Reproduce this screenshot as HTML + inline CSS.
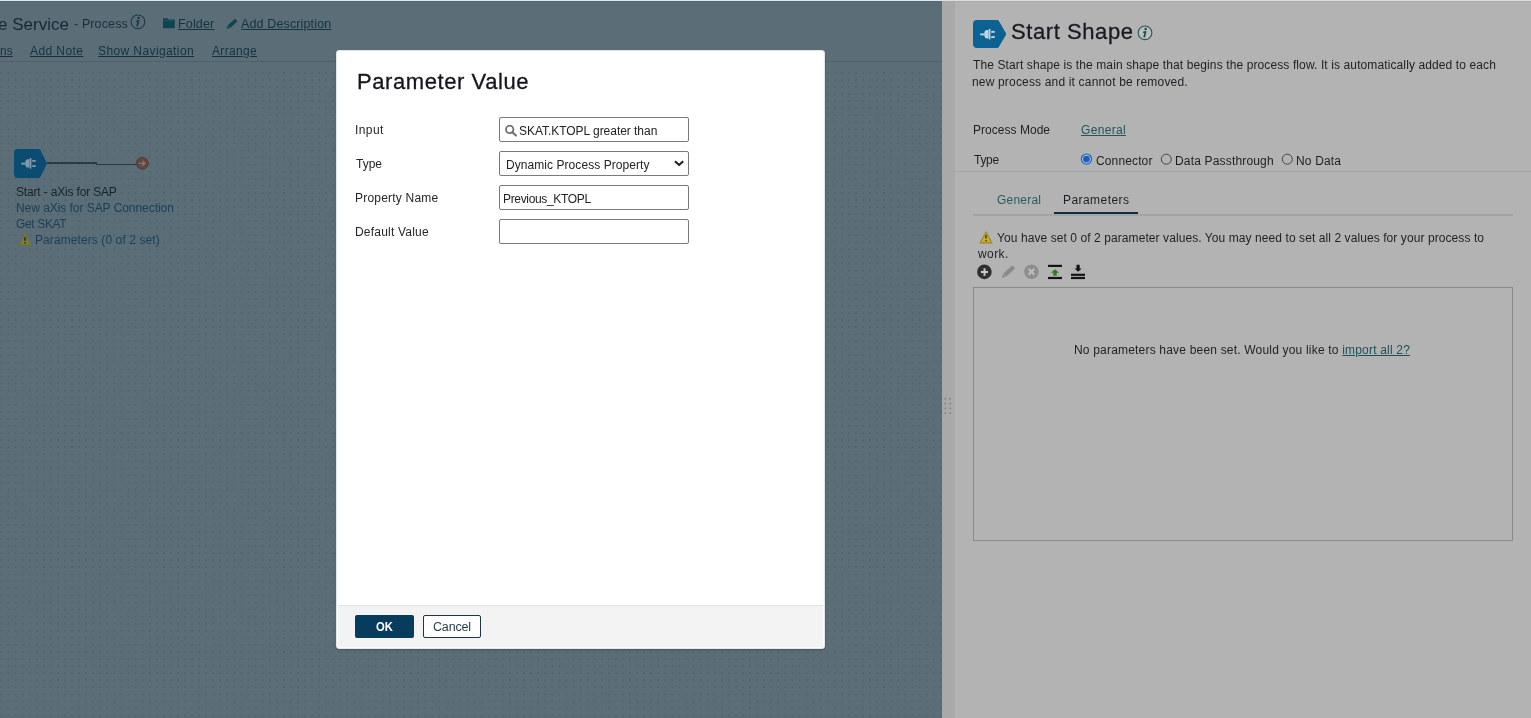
<!DOCTYPE html>
<html><head><meta charset="utf-8">
<style>
*{margin:0;padding:0;box-sizing:border-box}
html,body{width:1531px;height:718px;overflow:hidden;font-family:"Liberation Sans",sans-serif;}
body{position:relative;background:#5b6e77}
.t{position:absolute;white-space:nowrap;line-height:1}
#canvas{position:absolute;left:0;top:0;width:942px;height:718px;background-color:#5b6e77;
 background-image:radial-gradient(circle at 1px 1px, rgba(55,70,80,.28) 0.7px, transparent 1px);
 background-size:7.07px 7.07px;background-position:0.5px 1.3px}
#hdr{position:absolute;left:0;top:0;width:942px;height:62px;background:#5b6e77;border-bottom:1px solid #4f6068}
#topstrip{position:absolute;left:0;top:0;width:942px;height:1px;background:#dfe8ee}
#topstrip2{position:absolute;left:942px;top:0;width:589px;height:1px;background:#dcdcdc}
#topline2{position:absolute;left:942px;top:1px;width:589px;height:1px;background:#aaaaaa}
#topline{position:absolute;left:0;top:1px;width:942px;height:1px;background:#55666e}
.u{text-decoration:underline;text-underline-offset:1px}
#splitter{position:absolute;left:942px;top:1px;width:13px;height:717px;background:#a9a9a9}
#panel{position:absolute;left:955px;top:1px;width:576px;height:717px;background:#b3b3b3}
#modal{position:absolute;left:336px;top:50px;width:489px;height:599px;background:#fcfcfc;border-radius:3px;overflow:hidden;border:1px solid #e2e6e8;box-shadow:0 1px 2px rgba(0,0,0,.22)}
#mbody{position:absolute;left:1px;top:1px;width:485px;height:553px;background:#fff}
#mfoot{position:absolute;left:1px;top:554px;width:485px;height:42px;background:#f3f3f3;border-top:1px solid #e2e2e2}
.fld{position:absolute;left:162px;width:190px;height:25px;border:1px solid #7a7a7a;border-radius:2px;background:#fff}
.lbl{font-size:12px;color:#262626}
.t{will-change:transform}
</style></head>
<body>
<div id="canvas"></div>
<div id="hdr"></div>
<div class="t" style="left:0;top:62px;width:942px;height:8px;background:#5b6e77"></div>
<div id="topstrip"></div><div id="topline"></div>

<!-- header texts -->
<div id="h_service" class="t" style="left:-1.8px;top:16.11px;font-size:17px;color:#142934;letter-spacing:0px">e Service</div>
<div id="h_process" class="t" style="left:74px;top:18px;font-size:12.5px;color:#1a303c;letter-spacing:0.12px">- Process</div>
<svg class="t" style="left:129.5px;top:14px" width="16" height="16" viewBox="0 0 16 16"><circle cx="8" cy="7.8" r="6.85" fill="none" stroke="#213c48" stroke-width="1.1"/><circle cx="8.6" cy="3.9" r="1.25" fill="#1b3a46"/><path d="M8.5 6.9L7.3 11.6" stroke="#1b3a46" stroke-width="1.8" stroke-linecap="round"/><path d="M6 7.4L8.6 6.8" stroke="#1b3a46" stroke-width="1.1"/></svg>
<svg class="t" style="left:163px;top:18px" width="13" height="11" viewBox="0 0 13 11"><path d="M0 0.3h4.5l0.8 1.2h6.5V10.2H0z" fill="#0f4550"/><path d="M0.6 2.6H11.2" stroke="#2f5a63" stroke-width="0.6"/></svg>
<div id="h_folder" class="t u" style="left:178px;top:18.21px;font-size:12.5px;color:#133340;letter-spacing:0.16px">Folder</div>
<svg class="t" style="left:225px;top:18px" width="13" height="12" viewBox="0 0 13 12"><g transform="translate(1.6 10.7) rotate(-42)" fill="#0f4550"><path d="M0 0L2.6 -1.8V1.8Z"/><rect x="3.1" y="-1.8" width="10" height="3.6" rx="0.5"/></g></svg>
<div id="h_adddesc" class="t u" style="left:240.6px;top:18.21px;font-size:12.5px;color:#133340;letter-spacing:0.14px">Add Description</div>

<div id="h_ns" class="t u" style="left:-0.4px;top:44.61px;font-size:12px;color:#133340;letter-spacing:0px">ns</div>
<div id="h_addnote" class="t u" style="left:29.8px;top:44.61px;font-size:12px;color:#133340;letter-spacing:0.41px">Add Note</div>
<div id="h_shownav" class="t u" style="left:98.2px;top:44.8px;font-size:12px;color:#133340;letter-spacing:0.4px">Show Navigation</div>
<div id="h_arrange" class="t u" style="left:211.6px;top:44.8px;font-size:12px;color:#133340;letter-spacing:0.33px">Arrange</div>

<!-- canvas shape -->
<svg class="t" style="left:14px;top:149px" width="34" height="29" viewBox="0 0 34 29">
 <path d="M4 0H24.5Q25.8 0 26.5 1.2L32.4 13.1Q33.1 14.5 32.4 15.9L26.5 27.8Q25.8 29 24.5 29H4Q0 29 0 25V4Q0 0 4 0Z" fill="#0b4c72"/>
 <g fill="#829aa8"><rect x="7.3" y="13.6" width="4" height="2"/><path d="M15.6 10.2V18.6H14Q11.2 18.6 11.2 14.4Q11.2 10.2 14 10.2Z"/><rect x="15.8" y="9" width="1.6" height="10.6"/><rect x="18.2" y="11" width="3.5" height="1.8"/><rect x="18.2" y="16.2" width="3.5" height="1.8"/></g>
</svg>
<div class="t" style="left:47px;top:162px;width:50px;height:2px;background:#2c3b42"></div>
<div class="t" style="left:96px;top:164px;width:41px;height:1px;background:#2c3b42"></div>
<svg class="t" style="left:135px;top:156px" width="15" height="15" viewBox="0 0 15 15"><circle cx="7.3" cy="7.3" r="6" fill="#62463f" stroke="#4c3a36" stroke-width="0.8"/><path d="M4.2 7.3h5.6M7.4 4.9l2.4 2.4-2.4 2.4" stroke="#8f7771" stroke-width="1.3" fill="none"/></svg>
<div id="c_start" class="t" style="left:15.7px;top:185.91px;font-size:12px;color:#16232b;letter-spacing:-0.17px">Start - aXis for SAP</div>
<div id="c_conn" class="t" style="left:15.7px;top:202px;font-size:12px;color:#1a3f56;letter-spacing:-0.05px">New aXis for SAP Connection</div>
<div id="c_get" class="t" style="left:15.7px;top:217.61px;font-size:12px;color:#1a3f56;letter-spacing:-0.35px">Get SKAT</div>
<svg class="t" style="left:18px;top:233px" width="14" height="13" viewBox="0 0 14 13"><path d="M7 1.3L12.7 11.8H1.3Z" fill="#7d7f3b" stroke="#6f733c" stroke-width="1.7" stroke-linejoin="round"/><rect x="6.2" y="4.2" width="1.6" height="3.6" fill="#2c2e1e"/><rect x="6.2" y="9.1" width="1.6" height="1.4" fill="#2c2e1e"/></svg>
<div id="c_params" class="t" style="left:35px;top:233.91px;font-size:12px;color:#1a3f56;letter-spacing:0.09px">Parameters (0 of 2 set)</div>

<div id="splitter"></div>
<svg class="t" style="left:943px;top:396px" width="10" height="20" viewBox="0 0 10 20"><g fill="#7c7c7c"><rect x="1.5" y="2" width="1.5" height="1.5"/><rect x="6.5" y="2" width="1.5" height="1.5"/><rect x="1.5" y="6.8" width="1.5" height="1.5"/><rect x="6.5" y="6.8" width="1.5" height="1.5"/><rect x="1.5" y="11.6" width="1.5" height="1.5"/><rect x="6.5" y="11.6" width="1.5" height="1.5"/><rect x="1.5" y="16.4" width="1.5" height="1.5"/><rect x="6.5" y="16.4" width="1.5" height="1.5"/></g></svg>
<div id="panel"></div>
<div id="topstrip2"></div><div id="topline2"></div>

<!-- right panel -->
<svg class="t" style="left:973px;top:19.8px" width="34" height="29" viewBox="0 0 34 29">
 <path d="M4 0H24Q25.3 0 26 1.2L32.6 12.6Q33.4 14 32.6 15.4L26 26.8Q25.3 28 24 28H4Q0 28 0 24V4Q0 0 4 0Z" fill="#0c6292"/>
 <g fill="#c2d3dd"><rect x="7.3" y="13.4" width="4" height="2"/><path d="M15.6 10V18.4H14Q11.2 18.4 11.2 14.2Q11.2 10 14 10Z"/><rect x="15.8" y="8.9" width="1.6" height="10.5"/><rect x="18.2" y="10.9" width="3.5" height="1.9"/><rect x="18.2" y="16.1" width="3.5" height="1.9"/></g>
</svg>
<div id="p_title" class="t" style="left:1010.8px;top:20.6px;font-size:22px;color:#1a1a22;-webkit-text-stroke:0.3px #1a1a22;letter-spacing:0.58px">Start Shape</div>
<svg class="t" style="left:1136.5px;top:24.5px" width="16" height="16" viewBox="0 0 16 16"><circle cx="8" cy="7.8" r="6.85" fill="rgba(205,228,228,.25)" stroke="#2d5558" stroke-width="1.1"/><circle cx="8.6" cy="3.9" r="1.25" fill="#1c4a4a"/><path d="M8.5 6.9L7.3 11.6" stroke="#1c4a4a" stroke-width="1.8" stroke-linecap="round"/><path d="M6 7.4L8.6 6.8" stroke="#1c4a4a" stroke-width="1.1"/></svg>
<div id="p_desc1" class="t" style="left:973px;top:58.91px;font-size:12px;color:#1f1f25;letter-spacing:0.11px">The Start shape is the main shape that begins the process flow. It is automatically added to each</div>
<div id="p_desc2" class="t" style="left:972px;top:76px;font-size:12px;color:#1f1f25;letter-spacing:0.17px">new process and it cannot be removed.</div>
<div id="p_pm" class="t" style="left:972.7px;top:124.3px;font-size:12px;color:#1f1f25;letter-spacing:0.03px">Process Mode</div>
<div id="p_general" class="t u" style="left:1081px;top:124.3px;font-size:12px;color:#22555e;letter-spacing:0.32px">General</div>
<div id="p_type" class="t" style="left:973.7px;top:153.61px;font-size:12px;color:#1f1f25;letter-spacing:-0.28px">Type</div>
<svg class="t" style="left:1080px;top:153px" width="13" height="13" viewBox="0 0 13 13"><circle cx="6.5" cy="6.1" r="5.1" fill="#a9c3e3" stroke="#1d5dab" stroke-width="1.1"/><circle cx="6.5" cy="6.1" r="3.4" fill="#1a5fbf"/></svg>
<div id="p_conn" class="t" style="left:1095.8px;top:155.41px;font-size:12px;color:#1f1f25;letter-spacing:0.13px">Connector</div>
<svg class="t" style="left:1160px;top:153.3px" width="13" height="13" viewBox="0 0 13 13"><circle cx="6.3" cy="6.2" r="5" fill="none" stroke="#444" stroke-width="1"/></svg>
<div id="p_dp" class="t" style="left:1174.9px;top:155.41px;font-size:12px;color:#1f1f25;letter-spacing:0.17px">Data Passthrough</div>
<svg class="t" style="left:1281px;top:153.3px" width="13" height="13" viewBox="0 0 13 13"><circle cx="6.3" cy="6.2" r="5" fill="none" stroke="#444" stroke-width="1"/></svg>
<div id="p_nd" class="t" style="left:1296px;top:155.41px;font-size:12px;color:#1f1f25;letter-spacing:0.17px">No Data</div>
<div class="t" style="left:955px;top:171px;width:576px;height:1px;background:#a2a2a2"></div>
<div id="p_tgen" class="t" style="left:996.8px;top:194px;font-size:12px;color:#2a5b62;letter-spacing:0.21px">General</div>
<div id="p_tpar" class="t" style="left:1062.5px;top:194px;font-size:12px;color:#1f1f25;letter-spacing:0.44px">Parameters</div>
<div class="t" style="left:973px;top:214px;width:540px;height:2px;background:#a4a4a4"></div>
<div class="t" style="left:1054px;top:212px;width:84px;height:2px;background:#0f2b3f"></div>
<svg class="t" style="left:979px;top:231px" width="14" height="13" viewBox="0 0 14 13"><path d="M7 1.2L12.8 11.9H1.2Z" fill="#c9b12d" stroke="#a89236" stroke-width="1.6" stroke-linejoin="round"/><rect x="6.2" y="4" width="1.6" height="3.6" fill="#4d4212"/><rect x="6.2" y="9" width="1.6" height="1.4" fill="#4d4212"/></svg>
<div id="p_warn" class="t" style="left:996.8px;top:231.91px;font-size:12px;color:#1f1f25;letter-spacing:0.08px">You have set 0 of 2 parameter values. You may need to set all 2 values for your process to</div>
<div id="p_work" class="t" style="left:977.5px;top:247.71px;font-size:12px;color:#1f1f25;letter-spacing:0.4px">work.</div>
<!-- toolbar -->
<svg class="t" style="left:976px;top:264px" width="17" height="16" viewBox="0 0 17 16"><circle cx="8.4" cy="7.9" r="7.3" fill="#2f2f2f"/><path d="M4.9 8H12M8.5 4.2V11.8" stroke="#cbcbcb" stroke-width="2"/></svg>
<svg class="t" style="left:1000px;top:265px" width="16" height="14" viewBox="0 0 16 14"><g transform="translate(1.9 12.6) rotate(-42)" fill="#898989"><path d="M0 0L3.2 -2.1V2.1Z"/><rect x="3.9" y="-2.1" width="12.1" height="4.2" rx="0.6"/></g></svg>
<svg class="t" style="left:1023px;top:264px" width="17" height="16" viewBox="0 0 17 16"><circle cx="8.45" cy="7.75" r="7.3" fill="#8e8e8e"/><path d="M5.6 4.9L11.3 10.6M11.3 4.9L5.6 10.6" stroke="#c0c0c0" stroke-width="2"/></svg>
<svg class="t" style="left:1047px;top:264px" width="16" height="16" viewBox="0 0 16 16"><rect x="1" y="0.8" width="14" height="2.2" fill="#141414"/><rect x="1" y="12.9" width="14" height="2.2" fill="#141414"/><path d="M8 5.3L12.1 8.8H9.7V11.8H6.3V8.8H3.9Z" fill="#2f7d1e"/></svg>
<svg class="t" style="left:1070px;top:264px" width="16" height="16" viewBox="0 0 16 16"><rect x="1" y="9.7" width="14" height="2.2" fill="#141414"/><rect x="1" y="12.9" width="14" height="2.2" fill="#141414"/><path d="M8.1 7.7L11.7 4.4H9.7V0.8H6.5V4.4H4.5Z" fill="#141414"/></svg>
<div class="t" style="left:973px;top:287px;width:540px;height:254px;border:1px solid #8a8a8a"></div>
<div id="p_nop" class="t" style="left:1074.4px;top:344px;font-size:12px;color:#1f1f25;letter-spacing:0.19px">No parameters have been set. Would you like to <span class="u" style="color:#1d5058">import all 2?</span></div>

<!-- modal -->
<div id="modal">
  <div id="mbody"></div>
  <div id="m_title" class="t" style="left:19.8px;top:19.81px;font-size:22px;color:#15151e;-webkit-text-stroke:0.3px #15151e;letter-spacing:0.57px">Parameter Value</div>
  <div id="m_l1" class="t lbl" style="left:18px;top:73px;letter-spacing:0.4px">Input</div>
  <div class="fld" style="top:66px"></div>
  <svg class="t" style="left:168px;top:74px" width="13" height="13" viewBox="0 0 13 13"><circle cx="4.7" cy="4.4" r="3.7" fill="none" stroke="#6f6f6f" stroke-width="1.8"/><path d="M7.6 7.4L11 10.6" stroke="#6f6f6f" stroke-width="2" stroke-linecap="round"/></svg>
  <div id="m_in" class="t" style="left:181.6px;top:74px;font-size:12px;color:#222;letter-spacing:-0.04px">SKAT.KTOPL greater than</div>
  <div id="m_l2" class="t lbl" style="left:19px;top:107px;letter-spacing:0px">Type</div>
  <div class="fld" style="top:100px"></div>
  <div id="m_sel" class="t" style="left:169px;top:108px;font-size:12px;color:#222;letter-spacing:0.06px">Dynamic Process Property</div>
  <svg class="t" style="left:337px;top:108px" width="11" height="8" viewBox="0 0 11 8"><path d="M1 2.2L5.1 6L9.2 2.2" fill="none" stroke="#1a1a1a" stroke-width="2"/></svg>
  <div id="m_l3" class="t lbl" style="left:18px;top:141px;letter-spacing:0.21px">Property Name</div>
  <div class="fld" style="top:134px"></div>
  <div id="m_pn" class="t" style="left:166px;top:142px;font-size:12px;color:#222;letter-spacing:-0.34px">Previous_KTOPL</div>
  <div id="m_l4" class="t lbl" style="left:18px;top:175px;letter-spacing:0.2px">Default Value</div>
  <div class="fld" style="top:168px"></div>
  <div id="mfoot">
    <div id="m_ok" class="t" style="left:17px;top:9px;width:59px;height:23px;background:#083c5c;border-radius:2px;color:#fff;font-weight:bold;font-size:12.5px;text-align:center;line-height:25px"><span style="display:inline-block;transform:scaleX(.9)">OK</span></div>
    <div id="m_cancel" class="t" style="left:85px;top:9px;width:58px;height:23px;background:#fff;border:1px solid #1f3541;border-radius:2px;color:#1f3a48;font-size:12.5px;text-align:center;line-height:23px;letter-spacing:-0.15px">Cancel</div>
  </div>
</div>
</body></html>
